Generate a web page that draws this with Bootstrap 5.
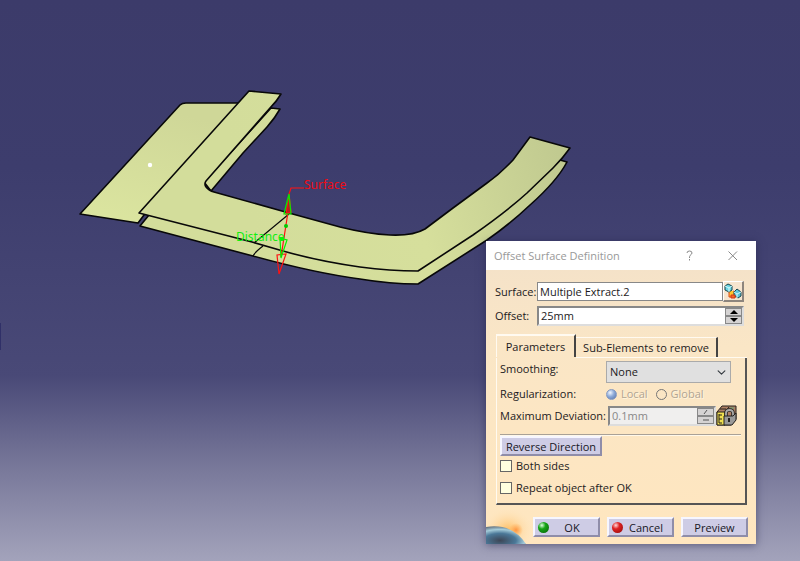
<!DOCTYPE html>
<html lang="en">
<head>
<meta charset="utf-8">
<meta name="viewport" content="width=device-width, initial-scale=1">
<title>Offset Surface Definition</title>
<link href="https://cdn.jsdelivr.net/npm/bootstrap@5.3.0/dist/css/bootstrap.min.css" rel="stylesheet">
<style>
body{font-family:"Open Sans","Noto Sans",sans-serif;font-size:11px;line-height:16px;color:#1c1a1c;background:#3c3b6b}
.viewport{background:linear-gradient(#3c3b6a 0,#3d3d6d 30%,#494977 67%,#777799 83%,#a3a3bb 100%)}
.scene{left:0;top:0;width:800px;height:561px}
.scene text{font-family:"Noto Sans",sans-serif;font-size:12px}
.window{left:486px;top:241px;width:270px;background:linear-gradient(#f3e1c9,#fae6c6 35%,#ffe6bf);box-shadow:0 1px 8px #20204688}
.titlebar{height:29px;padding:0 17px 0 8px;gap:34px;background:#fff;color:#999}
.titlebar button{border:0;background:none;padding:0;color:inherit}
.window-body{padding:11px 8px 7px 9px}
.field-label{width:42px;white-space:nowrap}
.sunken{border:2px solid #888;border-right-color:#ddd;border-bottom-color:#ddd;background:#fff;border-radius:0}
.sunken input{border:0;background:none;padding:0 2px;outline:0;color:inherit;width:100%;min-width:0}
.thin{border:1px solid #888;height:19px}
.pick{width:21px;height:21px;padding:0;background:#f6e5cf;border:1px solid #fff;border-right:2px solid #8d857d;border-bottom:2px solid #8d857d}
.spin{width:17px;flex:none}
.spin button{flex:1;padding:0;min-height:0;border:1px solid #fff;border-right-color:#555;border-bottom-color:#555;outline:1px solid #888;outline-offset:-1px;background:#d5d3d3;display:flex;align-items:center;justify-content:center}
.spin svg{display:block}
.tabs{margin:8px 0 0 1px}
.tabs button{border:0;border-top:1px solid #fffaf0;border-right:2px solid #444;background:none;height:20px;padding:0;color:inherit;white-space:nowrap}
.tabs .first{width:80px;height:23px;border-left:1px solid #fffaf0;border-top:2px solid #fffaf0}
.tabs .second{width:142px}
.tabline{height:1px;background:#fffaf0;margin-left:81px;margin-right:1px}
.panel{margin:0 1px;border-left:1px solid #fffaf0;border-right:2px solid #555;border-bottom:2px solid #555;padding:3px 4px 7px 3px}
.prop-label{width:106px;white-space:nowrap}
.choice{width:125px;height:22px;padding:0 24px 0 3px;border:1px solid #aaa;border-radius:0;background-color:#e0e0e0;background-size:9px;background-position:right 4px center;font-size:11px;line-height:18px;color:inherit}
.reg-row{height:22px}
.off{color:#b0a493;text-shadow:1px 1px #fff5df}
.off input{appearance:none;width:11px;height:11px;margin:0;border:1px solid #777;border-radius:50%}
.off input:checked{border-color:#8599c0;background:radial-gradient(circle at 35% 30%,#f2f7ff,#8eabd9 45%,#5270a5)}
.deviation{margin-left:2px;background:#f0efee;color:#888}
.rule{height:2px;background:#a9a197;border-bottom:1px solid #fff8e9}
.raised{height:20px;padding:0 3px;border:2px solid;border-color:#f6f6ff #8f8da9 #8f8da9 #f6f6ff;border-radius:0;background:#cecce5;color:#17171f;line-height:15px;white-space:nowrap;font-size:11px}
.reverse{width:102px;margin-bottom:2px}
.ticks{display:grid;gap:6px}
.ticks input{appearance:none;width:12px;height:12px;margin:0;border:1px solid #666;background:#ffffdf;border-radius:0}
.ticks input:checked{background:#666}
.actions{padding-top:12px;gap:7px}
.actions .raised{width:67px}
.ball{width:11px;height:11px;border-radius:50%;background:radial-gradient(circle at 35% 30%,#e0ffe0,#16a516 35%,#075e07)}
.ball.red{background:radial-gradient(circle at 35% 30%,#ffdada,#df2222 35%,#8a0909)}
.planet{left:0;bottom:0}
</style>
<script src="https://cdn.jsdelivr.net/npm/bootstrap@5.3.0/dist/js/bootstrap.bundle.min.js"></script>
</head>
<body>
<main class="viewport position-relative min-vh-100 overflow-hidden">
<svg class="scene position-absolute" viewBox="0 0 800 561" role="img" aria-label="Surface with offset preview">
<defs><linearGradient id="s" x1="0" y1="1" x2=".4" y2="0"><stop stop-color="#dce6a0"/><stop offset="1" stop-color="#cfd798"/></linearGradient>
<linearGradient id="b" gradientUnits="userSpaceOnUse" x1="250" y1="220" x2="570" y2="140"><stop stop-color="#d3dd9b"/><stop offset=".5" stop-color="#d6df9c"/><stop offset="1" stop-color="#bfc88f"/></linearGradient></defs>
<path d="M0 323h1v27H0z" fill="#303068"/>
<g stroke="#080808" stroke-width="1.6" stroke-linejoin="round">
<path fill="url(#s)" d="M80 214L180 105Q182 103 186 103H245L144 215L138 223Z"/>
<path fill="url(#b)" d="M271 108L280 109Q275 118 267 127L243 153L211 191L204 182Z"/>
<path fill="url(#b)" d="M149 215L140 226L253 256C293 267 330 275 360 279Q390 284 418 284L487 240Q510 224 530 205Q557 181 567 162L560 160L418 268Z"/>
<path fill="url(#b)" d="M139 213L249 91L281 94Q277 101 270 108L206 181C203 185 207 190 214 192L289 213L340 227Q368 234 390 235Q413 236 425 229L453 208L487 183Q500 174 513 160L530 137L570 148Q563 158 553 168L527 193Q506 212 473 235L418 271Q390 271 360 267Q318 261 283 251L252 242Z"/>
<path fill="none" d="M289 214L254 243M253 256Q255 252 263 246" stroke-width="1.2"/>
</g>
<circle cx="150" cy="165" r="2.2" fill="#fff"/>
<g fill="none" stroke="#ff1212" stroke-width="1.2"><path fill="#b72020" d="M286 214L289 194L291 212Z"/><path d="M304 188H291L289 194M288 212L281 257M277 255L279 274L286 254Z"/></g>
<g fill="none" stroke="#00ef00" stroke-width="1.2"><path d="M289 194L284 214H291Z"/><path d="M280 238L281 258L287 240Z"/></g>
<circle cx="286" cy="226" r="2" fill="#0c0"/><circle cx="282" cy="239" r="2" fill="#0f0"/>
<text x="304" y="189" fill="#ef0b14">Surface</text><text x="236" y="241" fill="#11ee11">Distance</text>
</svg>

<section class="window position-absolute" role="dialog" aria-labelledby="title">
<header class="titlebar d-flex align-items-center"><span class="me-auto" id="title">Offset Surface Definition</span>
<button type="button" aria-label="Help"><svg class="d-block" width="7" height="11" fill="none" stroke="#888"><path d="M1 3Q1 1 3.500 1Q6 1 6 3Q6 4 4 5.500Q3.500 6 3.500 8M3.500 9v1.500"/></svg></button>
<button type="button" aria-label="Close"><svg class="d-block" width="12" height="12" stroke="#888"><path d="M1.500 1.500L10 10M10 1.500L1.500 10"/></svg></button></header>
<form class="window-body position-relative">
<svg class="planet position-absolute" width="48" height="36" viewBox="0 0 48 36" aria-hidden="true"><defs><radialGradient id="g"><stop stop-color="#ffbd60"/><stop offset="1" stop-color="#ffe6bf" stop-opacity="0"/></radialGradient><radialGradient id="p" cx=".35" cy=".8" r=".8"><stop stop-color="#3d4656"/><stop offset=".5" stop-color="#4b7898"/><stop offset=".78" stop-color="#a4cbd9"/><stop offset="1" stop-color="#6b7b88"/></radialGradient><radialGradient id="o"><stop stop-color="#ff9440"/><stop offset="1" stop-color="#ffab50" stop-opacity="0"/></radialGradient></defs><ellipse cx="22" cy="22" rx="26" ry="22" fill="url(#g)"/><circle cx="30" cy="22" r="7" fill="url(#o)"/><path d="M0 19Q26 15 40 36H0Z" fill="url(#p)"/></svg>
<div class="d-flex align-items-center mb-1"><label class="field-label" for="surface">Surface:</label><div class="sunken thin d-flex flex-grow-1"><input id="surface" value="Multiple Extract.2"></div>
<button class="pick ms-0 me-1" type="button" aria-label="Multiple selection"><svg class="d-block" width="18" height="17" viewBox="0 0 18 17" stroke="#17454e"><path d="M5 7V14H12V9L9 8" fill="#ffc52e" stroke="#db461e"/><path d="M1 3L4 1L8 3V7L5 9L1 7Z" fill="#6bd5e4"/><path d="M10 9L13 6L17 9V13L14 15L10 12Z" fill="#5dc5da"/><path d="M1 3L5 5L8 3M5 5V9M10 9L13 11L17 9M13 11V15" fill="none" stroke="#d5f9fb"/><path d="M7 12h4v3H7z" fill="#f46b25" stroke="#d3361b"/></svg></button></div>
<div class="d-flex align-items-center me-1"><label class="field-label" for="offset">Offset:</label><div class="sunken d-flex flex-grow-1"><input id="offset" value="25mm"><div class="spin d-flex flex-column"><button type="button" aria-label="Increase offset"><svg width="8" height="4"><path d="M0 4L4 0L8 4Z"/></svg></button><button type="button" aria-label="Decrease offset"><svg width="8" height="4"><path d="M0 0L4 4L8 0Z"/></svg></button></div></div></div>
<div class="tabs d-flex align-items-end" role="tablist"><button class="first" type="button" role="tab" aria-selected="true">Parameters</button><button class="second" type="button" role="tab" aria-selected="false">Sub-Elements to remove</button></div>
<div class="tabline"></div>
<div class="panel" role="tabpanel">
<div class="d-flex align-items-start"><label class="prop-label" for="smooth">Smoothing:</label><select id="smooth" class="choice form-select"><option>None</option></select></div>
<div class="reg-row d-flex align-items-center"><span class="prop-label">Regularization:</span><div class="off d-flex align-items-center"><input id="local" type="radio" name="reg" checked disabled><label class="ms-1 me-2" for="local">Local</label><input id="global" type="radio" name="reg" disabled><label class="ms-1" for="global">Global</label></div></div>
<div class="d-flex align-items-center mb-2"><label class="prop-label" for="deviation">Maximum Deviation:</label><div class="sunken deviation d-flex flex-grow-1"><input id="deviation" value="0.1mm" disabled><div class="spin d-flex flex-column"><button type="button" disabled aria-label="Increase deviation"><svg width="8" height="4" stroke="#555"><path d="M2 4L5 0"/></svg></button><button type="button" disabled aria-label="Decrease deviation"><svg width="8" height="4" stroke="#555"><path d="M1 2H7"/></svg></button></div></div><svg class="me-1 flex-shrink-0" width="21" height="21" viewBox="0 0 21 21" stroke="#24211e"><path d="M1 7L6 1H20V14L15 20H1Z" fill="#ae8064"/><path d="M1 7H9V20H1Z" fill="#f0df51"/><path d="M3 9V18M3 10H6M3 14H6M3 18H6M9 7L13 2M4 4H10" fill="none"/><path d="M14 3H18" stroke="#5fa578"/><path d="M10 11V8Q10 5 13.500 5T17 8V11" fill="none" stroke="#24211e" stroke-width="3.500"/><path d="M10 11V8Q10 5 13.500 5T17 8V11" fill="none" stroke="#aaa" stroke-width="1.800"/><path d="M8 11H17L20 8V15L16 20H8Z" fill="#999"/><path d="M13 13V17" stroke-width="2"/></svg></div>
<div class="rule"></div>
<button class="raised reverse" type="button">Reverse Direction</button>
<div class="ticks"><div class="d-flex align-items-center gap-1"><input id="both" type="checkbox"><label for="both">Both sides</label></div><div class="d-flex align-items-center gap-1"><input id="repeat" type="checkbox"><label for="repeat">Repeat object after OK</label></div></div>
</div>
<div class="actions d-flex justify-content-end position-relative"><button class="raised d-flex align-items-center" type="button"><span class="ball"></span><span class="flex-grow-1">OK</span></button><button class="raised d-flex align-items-center" type="button"><span class="ball red"></span><span class="flex-grow-1">Cancel</span></button><button class="raised" type="button">Preview</button></div>
</form>
</section>
</main>
</body>
</html>
